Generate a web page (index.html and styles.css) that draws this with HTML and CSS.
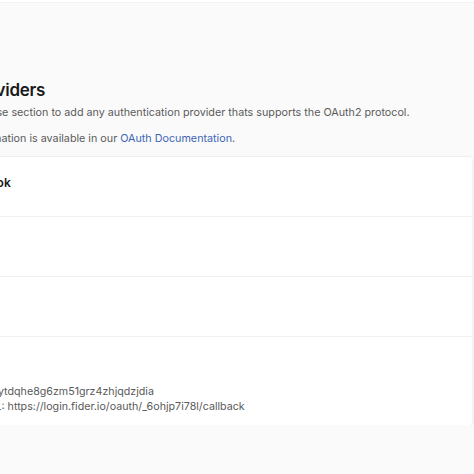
FILE: index.html
```html
<!DOCTYPE html>
<html lang="en">
<head>
<meta charset="utf-8">
<title>OAuth Providers</title>
<link rel="stylesheet" href="styles.css">
</head>
<body>
<div class="topbar"></div>
<main class="container">
  <h2 class="title">OAuth Providers</h2>
  <p class="subtitle">You can use these section to add any authentication provider thats supports the OAuth2 protocol.</p>
  <p class="subtitle last">Additional information is available in our <a class="link" href="#">OAuth Documentation</a>.</p>
  <ul class="card">
    <li class="row">
      <div class="row-head"><span class="logo"></span><strong class="name">Facebook</strong></div>
    </li>
    <li class="row">
      <div class="row-head"><span class="logo"></span><strong class="name">Google</strong></div>
    </li>
    <li class="row">
      <div class="row-head"><span class="logo"></span><strong class="name">GitHub</strong></div>
    </li>
    <li class="row expanded">
      <div class="row-head"><span class="logo"></span><strong class="name">Okta</strong></div>
      <div class="details">
        <div class="detail">Client ID: 0zjytdqhe8g6zm51grz4zhjqdzjdia</div>
        <div class="detail">Callback URL: https://login.fider.io/oauth/_6ohjp7i78l/callback</div>
      </div>
    </li>
  </ul>
</main>
</body>
</html>
```
FILE: styles.css
```css
html, body {
  margin: 0;
  padding: 0;
  background: #fafafa;
  font-family: Inter, "Noto Sans", sans-serif;
  color: #1e1e1e;
  overflow: hidden;
}

.topbar {
  height: 2px;
  background: #fefefe;
  border-bottom: 1px solid #f3f3f3;
}

.container {
  margin-left: -85px;
  width: 557px;
  padding-top: 77px;
}

.title {
  margin: 0 0 4px;
  font-size: 17px;
  line-height: 20px;
  font-weight: 600;
  letter-spacing: -0.3px;
  color: #1a1a1a;
}

.subtitle {
  margin: 0 0 8px;
  font-size: 10.75px;
  line-height: 18px;
  color: #5a5a5a;
}

.subtitle.last {
  margin-bottom: 8px;
}

.link {
  color: #3e66b6;
  text-decoration: none;
}

.card {
  list-style: none;
  margin: 0;
  padding: 0;
  background: #fff;
  border-top: 1px solid #efefef;
  border-radius: 3px;
  box-shadow: 0 2px 4px rgba(0, 0, 0, 0.08);
}

.row {
  padding: 16px 0 13px;
  border-bottom: 1px solid #f1f1f1;
}

.row.expanded {
  padding-bottom: 11px;
  border-bottom: none;
}

.row-head {
  display: flex;
  align-items: flex-start;
  gap: 8px;
  min-height: 30px;
  padding-left: 7px;
}

.logo {
  width: 24px;
  height: 24px;
}

.name {
  font-size: 12px;
  line-height: 20px;
  font-weight: 600;
  color: #1a1a1a;
}

.details {
  margin-top: 1px;
  padding-left: 19px;
  font-size: 10.7px;
  line-height: 15px;
  color: #5a5a5a;
}
```
